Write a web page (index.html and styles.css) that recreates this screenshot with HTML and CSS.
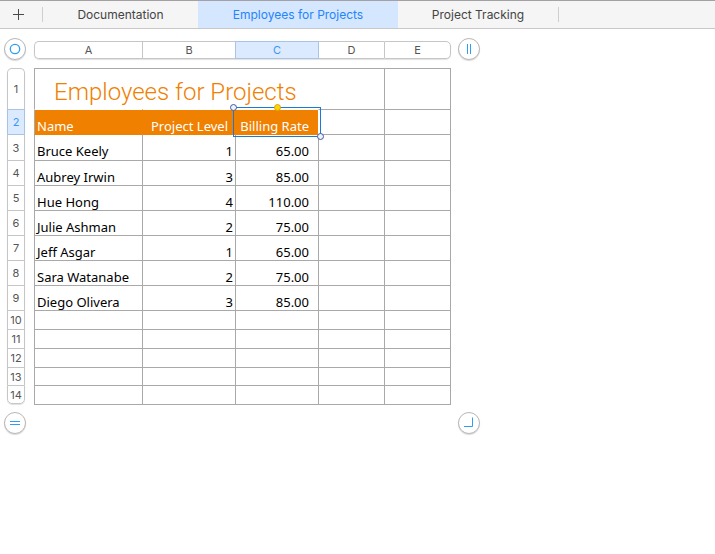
FILE: index.html
```
<!DOCTYPE html>
<html lang="en">
<head>
    <meta charset="UTF-8">
    <meta name="viewport" content="width=device-width, initial-scale=1.0">
    <title>Employees for Projects</title>
    <link rel="stylesheet" href="styles.css">
</head>
<body>
    <nav class="tabs">
        <button class="add-sheet" aria-label="Add sheet">
            <svg width="13" height="13" viewBox="0 0 13 13"><path d="M6.5 1V12M1 6.5H12" stroke="#4a4a4a" stroke-width="1" fill="none"/></svg>
        </button>
        <button class="tab tab-first">Documentation</button>
        <button class="tab tab-wide active">Employees for Projects</button>
        <button class="tab tab-last">Project Tracking</button>
    </nav>

    <main class="sheet">
        <button class="handle" aria-label="Select table">
            <svg width="12" height="12" viewBox="0 0 12 12"><circle cx="6" cy="6" r="4.7" stroke="#2f9df4" stroke-width="1.3" fill="none"/></svg>
        </button>
        <div class="col-heads">
            <div class="col-head col-a">A</div>
            <div class="col-head col-b">B</div>
            <div class="col-head col-c selected">C</div>
            <div class="col-head col-d">D</div>
            <div class="col-head col-e">E</div>
        </div>
        <button class="handle" aria-label="Add column">
            <svg width="12" height="12" viewBox="0 0 12 12"><path d="M4.5 1V11M7.5 1V11" stroke="#2f9df4" stroke-width="1" fill="none"/></svg>
        </button>

        <div class="row-heads">
            <div class="row-head row-title">1</div>
            <div class="row-head row-data selected">2</div>
            <div class="row-head row-tall">3</div>
            <div class="row-head row-data">4</div>
            <div class="row-head row-data">5</div>
            <div class="row-head row-data">6</div>
            <div class="row-head row-data">7</div>
            <div class="row-head row-data">8</div>
            <div class="row-head row-data">9</div>
            <div class="row-head row-empty">10</div>
            <div class="row-head row-empty">11</div>
            <div class="row-head row-empty">12</div>
            <div class="row-head row-short">13</div>
            <div class="row-head row-empty">14</div>
        </div>
        <div class="table-wrap">
            <table class="grid">
                <colgroup>
                    <col class="col-a">
                    <col class="col-b">
                    <col class="col-c">
                    <col class="col-d">
                    <col class="col-e">
                </colgroup>
                <thead>
                    <tr class="row-title">
                        <th class="title" colspan="4">Employees for Projects</th>
                        <td></td>
                    </tr>
                    <tr class="row-data heading">
                        <th>Name</th>
                        <th class="level">Project Level</th>
                        <th class="rate">Billing Rate</th>
                        <td></td>
                        <td></td>
                    </tr>
                </thead>
                <tbody>
                    <tr class="row-tall first"><td>Bruce Keely</td><td class="level">1</td><td class="rate">65.00</td><td></td><td></td></tr>
                    <tr class="row-data"><td>Aubrey Irwin</td><td class="level">3</td><td class="rate">85.00</td><td></td><td></td></tr>
                    <tr class="row-data"><td>Hue Hong</td><td class="level">4</td><td class="rate">110.00</td><td></td><td></td></tr>
                    <tr class="row-data"><td>Julie Ashman</td><td class="level">2</td><td class="rate">75.00</td><td></td><td></td></tr>
                    <tr class="row-data"><td>Jeff Asgar</td><td class="level">1</td><td class="rate">65.00</td><td></td><td></td></tr>
                    <tr class="row-data"><td>Sara Watanabe</td><td class="level">2</td><td class="rate">75.00</td><td></td><td></td></tr>
                    <tr class="row-data"><td>Diego Olivera</td><td class="level">3</td><td class="rate">85.00</td><td></td><td></td></tr>
                    <tr class="row-empty"><td></td><td></td><td></td><td></td><td></td></tr>
                    <tr class="row-empty"><td></td><td></td><td></td><td></td><td></td></tr>
                    <tr class="row-empty"><td></td><td></td><td></td><td></td><td></td></tr>
                    <tr class="row-short"><td></td><td></td><td></td><td></td><td></td></tr>
                    <tr class="row-empty"><td></td><td></td><td></td><td></td><td></td></tr>
                </tbody>
            </table>
            <div class="selection">
                <span class="dot dot-start"></span>
                <span class="dot dot-fill"></span>
                <span class="dot dot-end"></span>
            </div>
        </div>

        <button class="handle add-row" aria-label="Add row">
            <svg width="12" height="12" viewBox="0 0 12 12"><path d="M1 4.5H11M1 7.5H11" stroke="#2f9df4" stroke-width="1" fill="none"/></svg>
        </button>
        <button class="handle add-both" aria-label="Add row and column">
            <svg width="12" height="12" viewBox="0 0 12 12"><path d="M1 9.5H9.5V0.5" stroke="#2f9df4" stroke-width="1" fill="none"/></svg>
        </button>
    </main>
</body>
</html>
```
FILE: styles.css
```
* {
    box-sizing: border-box;
}

body {
    margin: 0;
    background: white;
    color: #000;
    font-family: Inter, "Liberation Sans", sans-serif;
}

button {
    margin: 0;
    padding: 0;
    border: none;
    background: none;
    font-family: inherit;
    cursor: pointer;
}

/* sheet tabs */
.tabs {
    display: flex;
    align-items: center;
    height: 29px;
    background: #f5f5f5;
    border-top: 1px solid #a3a1a3;
    border-bottom: 1px solid #c8c8c8;
}

.add-sheet {
    display: flex;
    align-items: center;
    justify-content: center;
    width: 43px;
    height: 15px;
    padding-right: 5px;
    border-right: 1px solid #cfcfcf;
}

.tab {
    height: 27px;
    font-size: 12px;
    color: #444;
}

.tab-first {
    width: 155px;
}

.tab-wide {
    width: 200px;
}

.tab-last {
    width: 161px;
    height: 15px;
    border-right: 1px solid #cfcfcf;
}

.tab.active {
    background: #d5e7ff;
    color: #2484fb;
}

/* column widths and row heights, shared by the rulers and the table */
.col-a {
    width: 108px;
}

.col-b {
    width: 93px;
}

.col-c {
    width: 83px;
}

.col-d {
    width: 66px;
}

.col-e {
    width: 67px;
}

.row-title {
    height: 41px;
}

.row-data {
    height: 25px;
}

.row-tall {
    height: 26px;
}

.row-empty {
    height: 19px;
}

.row-short {
    height: 18px;
}

.sheet {
    display: grid;
    grid-template-columns: 23px max-content 22px;
    gap: 7px;
    padding: 9px 4px;
}

.handle {
    display: flex;
    align-items: center;
    justify-content: center;
    width: 22px;
    height: 22px;
    border: 1px solid #b8b8b8;
    border-radius: 50%;
    background: white;
    box-shadow: 0 1px 1px rgba(0, 0, 0, 0.15);
}

.add-both {
    grid-column: 3;
}

.col-heads {
    display: flex;
    height: 18px;
    margin-top: 3px;
    margin-bottom: 2px;
    border-radius: 5px;
    box-shadow: 0 1px 1px rgba(0, 0, 0, 0.12);
}

.col-head,
.row-head {
    display: flex;
    align-items: center;
    justify-content: center;
    font-size: 11px;
    color: #555;
    border: 0 solid #c6c6c6;
}

.col-head {
    border-width: 1px 0 1px 1px;
}

.col-head:first-child {
    border-radius: 5px 0 0 5px;
}

.col-head:last-child {
    border-right-width: 1px;
    border-radius: 0 5px 5px 0;
}

.row-heads {
    width: 18px;
    margin-left: 3px;
    align-self: start;
    border-radius: 5px;
    box-shadow: 0 1px 1px rgba(0, 0, 0, 0.12);
}

.row-head {
    border-width: 1px 1px 0 1px;
}

.row-head:first-child {
    border-radius: 5px 5px 0 0;
}

.row-head:last-child {
    border-bottom-width: 1px;
    border-radius: 0 0 5px 5px;
}

.row-head.selected,
.col-head.selected {
    background: #dbeaff;
    border-color: #a9c3e6;
    color: #3a96f3;
}

.col-head.selected + .col-head {
    border-left-color: #a9c3e6;
}

.row-head.selected + .row-head {
    border-top-color: #a9c3e6;
}

.table-wrap {
    position: relative;
    grid-column: 2 / 4;
    justify-self: start;
}

.grid {
    width: 417px;
    table-layout: fixed;
    border-collapse: separate;
    border-spacing: 0;
    font-family: "Noto Sans", sans-serif;
    font-size: 13px;
    line-height: 15px;
}

.grid td,
.grid th {
    padding: 0 2px;
    border-top: 1px solid #a9a9a9;
    border-left: 1px solid #a9a9a9;
    font-weight: 400;
    text-align: left;
    vertical-align: bottom;
    white-space: nowrap;
}

.grid tr > :last-child {
    border-right: 1px solid #a9a9a9;
}

.grid tr:last-child td {
    border-bottom: 1px solid #a9a9a9;
}

.grid thead tr:last-child td {
    border-bottom: none;
}

.grid tbody tr:last-child {
    height: 20px;
}

.grid .title {
    padding-left: 19px;
    padding-top: 5px;
    font-family: Roboto, sans-serif;
    font-size: 24px;
    font-weight: 300;
    line-height: 30px;
    color: #f08000;
    vertical-align: middle;
}

.heading th {
    background: #f08000;
    border-color: #f08000;
    border-top-color: white;
    color: white;
}

.heading th:first-child {
    border-left-color: #a9a9a9;
}

.heading th + td {
    border-left-color: white;
}

.grid .first td {
    padding-bottom: 1px;
}

.first td:nth-child(-n+3) {
    border-top-color: #f08000;
}

.grid .level,
.grid .rate {
    text-align: right;
}

.grid .rate {
    padding-right: 9px;
}

.grid .heading .level {
    padding-right: 7px;
}

/* selected cell frame */
.selection {
    position: absolute;
    left: 199px;
    top: 39px;
    width: 88px;
    height: 30px;
    border: 1px solid #1b7ad6;
}

.dot {
    position: absolute;
    width: 7px;
    height: 7px;
    border: 1px solid #4358a0;
    border-radius: 50%;
    background: #eef2fb;
}

.dot-start {
    left: -4px;
    top: -4px;
}

.dot-fill {
    left: 40px;
    top: -4px;
    border-color: #d9a800;
    background: #ffd400;
}

.dot-end {
    right: -4px;
    bottom: -4px;
}
```
